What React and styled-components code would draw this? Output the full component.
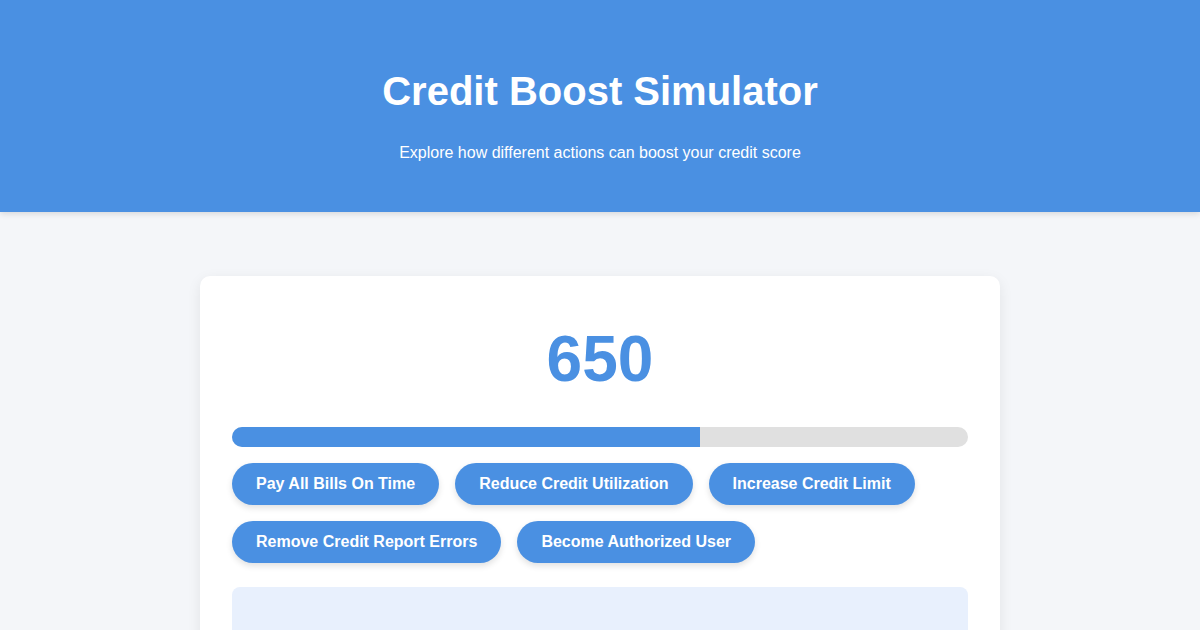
import React, { useState } from 'react';
import styled, { createGlobalStyle } from 'styled-components';

const GlobalStyle = createGlobalStyle`
  * {
    box-sizing: border-box;
  }
  body {
    margin: 0;
    background-color: #f4f6f9;
    font-family: 'Liberation Sans', Arial, sans-serif;
    color: #333;
  }
`;

const Header = styled.header`
  background-color: #4a90e2;
  color: #fff;
  text-align: center;
  padding: 69px 20px 50px;
  box-shadow: 0 2px 6px rgba(0, 0, 0, 0.12);
`;

const Title = styled.h1`
  margin: 0 0 30px;
  font-size: 40px;
  font-weight: 700;
`;

const Subtitle = styled.p`
  margin: 0;
  font-size: 16px;
`;

const Main = styled.main`
  padding: 64px 20px;
  display: flex;
  justify-content: center;
`;

const Card = styled.section`
  width: 800px;
  background: #fff;
  border-radius: 10px;
  padding: 32px;
  box-shadow: 0 4px 14px rgba(0, 0, 0, 0.08);
`;

const Score = styled.div`
  margin: 14px 0 31px;
  text-align: center;
  font-size: 64px;
  font-weight: 700;
  color: #4a90e2;
`;

const Track = styled.div`
  height: 20px;
  background: #e0e0e0;
  border-radius: 10px;
  overflow: hidden;
`;

const Fill = styled.div`
  height: 100%;
  background: #4a90e2;
`;

const Actions = styled.div`
  display: flex;
  flex-wrap: wrap;
  gap: 16px;
  margin-top: 16px;
`;

const ActionButton = styled.button`
  height: 42px;
  padding: 0 24px;
  border: none;
  border-radius: 21px;
  background: #4a90e2;
  color: #fff;
  font-family: inherit;
  font-size: 16px;
  font-weight: 700;
  cursor: pointer;
  box-shadow: 0 3px 6px rgba(0, 0, 0, 0.12);
  opacity: ${p => (p.$used ? 0.6 : 1)};
`;

const Feedback = styled.div`
  margin-top: 24px;
  min-height: 90px;
  background: #e8f0fd;
  border-radius: 8px;
`;

const actions = [
  { label: 'Pay All Bills On Time', boost: 20 },
  { label: 'Reduce Credit Utilization', boost: 30 },
  { label: 'Increase Credit Limit', boost: 15 },
  { label: 'Remove Credit Report Errors', boost: 25 },
  { label: 'Become Authorized User', boost: 10 },
];

const App = () => {
  const [score, setScore] = useState(650);
  const [used, setUsed] = useState([]);

  const pct = ((score - 300) / 550) * 100;

  const apply = (a) => {
    if (used.includes(a.label)) return;
    setUsed([...used, a.label]);
    setScore(Math.min(850, score + a.boost));
  };

  return (
    <>
      <GlobalStyle />
      <Header>
        <Title>Credit Boost Simulator</Title>
        <Subtitle>Explore how different actions can boost your credit score</Subtitle>
      </Header>
      <Main>
        <Card>
          <Score>{score}</Score>
          <Track>
            <Fill style={{ width: `${pct}%` }} />
          </Track>
          <Actions>
            {actions.map(a => (
              <ActionButton
                key={a.label}
                $used={used.includes(a.label)}
                onClick={() => apply(a)}
              >
                {a.label}
              </ActionButton>
            ))}
          </Actions>
          <Feedback />
        </Card>
      </Main>
    </>
  );
};

export default App;
